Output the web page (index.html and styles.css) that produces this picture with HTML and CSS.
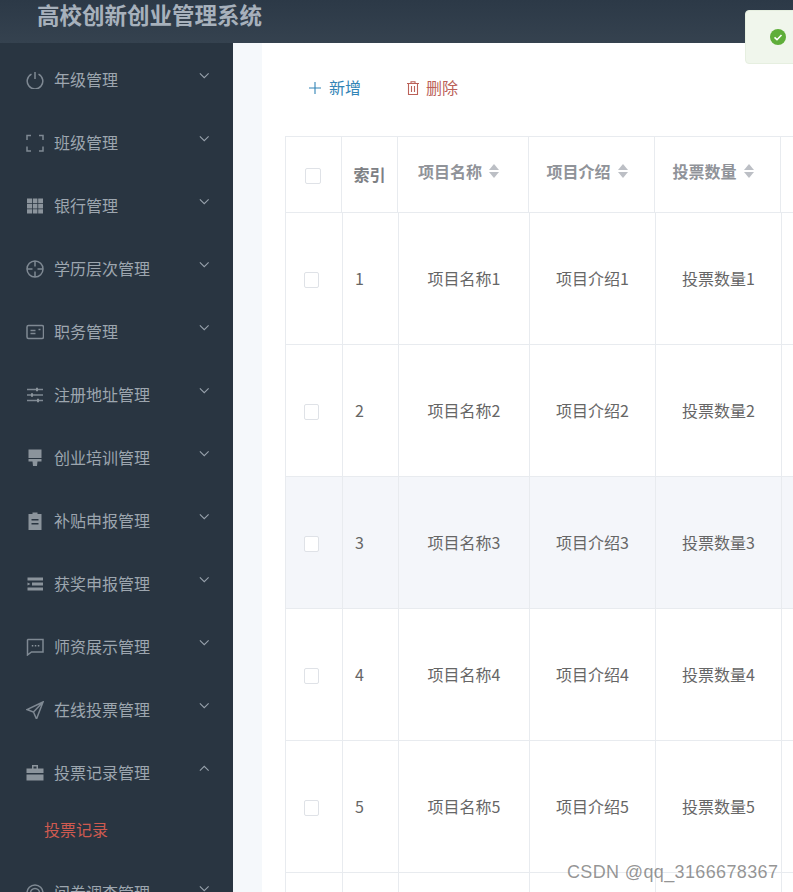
FILE: index.html
```html
<!DOCTYPE html>
<html lang="zh">
<head>
<meta charset="utf-8">
<title>高校创新创业管理系统</title>
<link rel="stylesheet" href="styles.css">
</head>
<body>
<div class="app">
  <header class="topbar"><h1 class="brand">高校创新创业管理系统</h1></header>
  <div class="shell">
    <nav class="sidebar">
      <div class="nav-item"><svg class="ico" viewBox="0 0 18 18"><path class="ln" d="M5.5 3.2a7.8 7.8 0 1 0 7 0M9 1v7"/></svg><span>年级管理</span><svg class="chev" viewBox="0 0 12 8"><path d="M1 1.5l5 5 5-5"/></svg></div>
      <div class="nav-item"><svg class="ico" viewBox="0 0 18 18"><path class="ln" d="M1 6V1.5h4M13 1.5h4V6M17 12.5V17h-4M5 17H1v-4.500"/></svg><span>班级管理</span><svg class="chev" viewBox="0 0 12 8"><path d="M1 1.500l5 5 5-5"/></svg></div>
      <div class="nav-item"><svg class="ico" viewBox="0 0 18 18"><path class="fl" d="M1 1.500h5v4.500H1zM6.800 1.500h4.600v4.500H6.800zM12.200 1.500H17v4.500h-4.800zM1 6.800h5v4.600H1zM6.800 6.800h4.600v4.600H6.800zM12.200 6.800H17v4.600h-4.800zM1 12.200h5V16.500H1zM6.800 12.200h4.600V16.500H6.800zM12.200 12.200H17V16.500h-4.800z"/></svg><span>银行管理</span><svg class="chev" viewBox="0 0 12 8"><path d="M1 1.500l5 5 5-5"/></svg></div>
      <div class="nav-item"><svg class="ico" viewBox="0 0 18 18"><circle class="ln" cx="9" cy="9" r="8"/><path class="ln" d="M9 1v5.500M9 11.500V17M1 9h5.500M11.500 9H17"/></svg><span>学历层次管理</span><svg class="chev" viewBox="0 0 12 8"><path d="M1 1.500l5 5 5-5"/></svg></div>
      <div class="nav-item"><svg class="ico" viewBox="0 0 18 18"><rect class="ln" x="1" y="2.500" width="16.500" height="13" rx="1.500"/><path class="ln" d="M4.500 7.500h5M4.500 10.500h5M12.500 6.500h2"/></svg><span>职务管理</span><svg class="chev" viewBox="0 0 12 8"><path d="M1 1.500l5 5 5-5"/></svg></div>
      <div class="nav-item"><svg class="ico" viewBox="0 0 18 18"><path class="ln" d="M1 3.500h16M1 9h16M1 14.500h16"/><path class="fl" d="M10 1.800h2v3.400h-2zM5 7.300h2v3.400H5zM11 12.800h2v3.400h-2z"/></svg><span>注册地址管理</span><svg class="chev" viewBox="0 0 12 8"><path d="M1 1.500l5 5 5-5"/></svg></div>
      <div class="nav-item"><svg class="ico" viewBox="0 0 18 18"><path class="fl" d="M2.500 .5h13v8.500h-13zM2.500 10h13v2.500h-4l-.5 4.500h-4l-.5-4.500h-4z"/></svg><span>创业培训管理</span><svg class="chev" viewBox="0 0 12 8"><path d="M1 1.500l5 5 5-5"/></svg></div>
      <div class="nav-item"><svg class="ico" viewBox="0 0 18 18"><path class="fl" fill-rule="evenodd" d="M6.500 0.500h5V2h4v16h-13V2h4zM5.500 7v1.500h7V7zM5.500 11v1.500h7V11z"/></svg><span>补贴申报管理</span><svg class="chev" viewBox="0 0 12 8"><path d="M1 1.500l5 5 5-5"/></svg></div>
      <div class="nav-item"><svg class="ico" viewBox="0 0 18 18"><path class="fl" d="M1.500 2.500h15.500v3H1.500zM6 7.500h11v3H6zM1.500 12.500h15.500v3H1.500zM1.500 7.500l3 1.500-3 1.500z"/></svg><span>获奖申报管理</span><svg class="chev" viewBox="0 0 12 8"><path d="M1 1.500l5 5 5-5"/></svg></div>
      <div class="nav-item"><svg class="ico" viewBox="0 0 18 18"><path class="ln" d="M2 1.500h15v12.500H5.500L1.500 17V2z"/><path class="fl" d="M5.800 7h1.500v1.500H5.800zM8.800 7h1.500v1.500H8.800zM11.800 7h1.500v1.500h-1.500z"/></svg><span>师资展示管理</span><svg class="chev" viewBox="0 0 12 8"><path d="M1 1.500l5 5 5-5"/></svg></div>
      <div class="nav-item"><svg class="ico" viewBox="0 0 18 18"><path class="ln" d="M17 1L1 8.500l6.500 2.500 3 7zM7.500 11L17 1"/></svg><span>在线投票管理</span><svg class="chev" viewBox="0 0 12 8"><path d="M1 1.500l5 5 5-5"/></svg></div>
      <div class="nav-item"><svg class="ico" viewBox="0 0 18 18"><path class="fl" d="M6 1h6v3.500h5.500V9H.5V4.500H6zM7.500 2.500v2h3v-2zM.5 10.500h17V16.500H.5z"/></svg><span>投票记录管理</span><svg class="chev" viewBox="0 0 12 8"><path d="M1 6.500l5-5 5 5"/></svg></div>
      <div class="nav-sub">投票记录</div>
      <div class="nav-item"><svg class="ico" viewBox="0 0 18 18"><circle class="ln" cx="9" cy="9" r="8"/><circle class="ln" cx="9" cy="9" r="4.500"/></svg><span>问卷调查管理</span><svg class="chev" viewBox="0 0 12 8"><path d="M1 1.500l5 5 5-5"/></svg></div>
    </nav>
    <main class="main">
      <section class="panel">
        <div class="toolbar">
          <button class="tool tool-add"><svg class="tool-ico" viewBox="0 0 12 12"><path d="M6 0v12M0 6h12"/></svg>新增</button>
          <button class="tool tool-del"><svg class="tool-ico" viewBox="0 0 12 14"><path d="M0 2.500h12M4 2.500V.8h4v1.700M1.500 2.500v11h9v-11M4.500 5v6M7.500 5v6"/></svg>删除</button>
        </div>
        <div class="thead grid">
          <div class="cell"><i class="check check-head"></i></div>
          <div class="cell th-index">索引</div>
          <div class="cell th">项目名称<i class="sort"></i></div>
          <div class="cell th">项目介绍<i class="sort"></i></div>
          <div class="cell th">投票数量<i class="sort"></i></div>
          <div class="cell"></div>
        </div>
        <div class="tbody">
          <div class="row grid"><div class="cell"><i class="check"></i></div><div class="cell idx">1</div><div class="cell">项目名称1</div><div class="cell">项目介绍1</div><div class="cell">投票数量1</div><div class="cell"></div></div>
          <div class="row grid"><div class="cell"><i class="check"></i></div><div class="cell idx">2</div><div class="cell">项目名称2</div><div class="cell">项目介绍2</div><div class="cell">投票数量2</div><div class="cell"></div></div>
          <div class="row grid row-hover"><div class="cell"><i class="check"></i></div><div class="cell idx">3</div><div class="cell">项目名称3</div><div class="cell">项目介绍3</div><div class="cell">投票数量3</div><div class="cell"></div></div>
          <div class="row grid"><div class="cell"><i class="check"></i></div><div class="cell idx">4</div><div class="cell">项目名称4</div><div class="cell">项目介绍4</div><div class="cell">投票数量4</div><div class="cell"></div></div>
          <div class="row grid"><div class="cell"><i class="check"></i></div><div class="cell idx">5</div><div class="cell">项目名称5</div><div class="cell">项目介绍5</div><div class="cell">投票数量5</div><div class="cell"></div></div>
          <div class="row grid"><div class="cell"></div><div class="cell"></div><div class="cell"></div><div class="cell"></div><div class="cell"></div><div class="cell"></div></div>
        </div>
      </section>
    </main>
  </div>
</div>
<div class="toast"><svg class="toast-ico" viewBox="0 0 16 16"><circle cx="8" cy="8" r="8"/><path d="M4.500 8.300l2.500 2.400 4.500-4.700"/></svg></div>
<div class="watermark">CSDN @qq_3166678367</div>
</body>
</html>
```
FILE: styles.css
```css
* { box-sizing: border-box; }
html, body { margin: 0; height: 100%; overflow: hidden; }
body { font-family: "Noto Sans CJK SC", "Liberation Sans", sans-serif; font-size: 16px; color: #666; background: #fff; }
.app { height: 892px; display: flex; flex-direction: column; }

.topbar { height: 43px; flex: none; background: linear-gradient(#2c3947, #35424f); padding-left: 37px; }
.brand { margin: 0; font-size: 22.5px; line-height: 29px; font-weight: 700; color: #a7b1bc; white-space: nowrap; }

.shell { flex: 1; display: flex; min-height: 0; }
.sidebar { width: 233px; flex: none; background: #293541; padding-top: 5px; overflow: hidden; }
.nav-item { height: 63px; display: flex; align-items: center; padding: 0 24px 0 26px; color: #9da6af; line-height: 63px; }
.nav-item span { margin-left: 10px; flex: 1; white-space: nowrap; }
.ico { width: 18px; height: 18px; flex: none; }
.ln { fill: none; stroke: #7f8993; stroke-width: 1.5; }
.fl { fill: #8b949c; }
.chev { width: 10.5px; height: 7px; flex: none; margin-top: -8px; }
.chev path { fill: none; stroke: #98a2ac; stroke-width: 1.200; }
.nav-sub { height: 50px; margin-bottom: 7px; line-height: 50px; padding-left: 44px; color: #cf5a50; }

.main { flex: 1; min-width: 0; background: #f5f8fb; padding-left: 29px; overflow: hidden; }
.panel { height: 100%; background: #fff; padding-left: 23px; overflow: hidden; }
.toolbar { height: 90px; margin-bottom: 3px; padding: 0 0 2px 24px; display: flex; align-items: center; gap: 46px; }
.tool { border: 0; padding: 0; background: none; font: inherit; display: flex; align-items: center; gap: 8px; }
.tool-ico { width: 12px; height: 14px; margin-top: 1px; }
.tool-ico path { fill: none; stroke: currentColor; stroke-width: 1.100; }
.tool-add { color: #3284b6; }
.tool-del { color: #bb6158; gap: 7px; }

.grid { display: grid; grid-template-columns: 56px 56px 131px 126px 126px 200px; }
.thead { height: 77px; border-top: 1px solid #e8ebef; border-bottom: 1px solid #e8ebef; }
.thead .cell { border-left: 1px solid #e8ebef; font-weight: 700; color: #909399; }
.cell { display: flex; align-items: center; justify-content: center; }
.th { padding: 0 8px 7px 0; }
.th-index { color: #7d8084 !important; padding-bottom: 2px; }
.sort { width: 11px; height: 14px; margin-left: 7px; position: relative; flex: none; }
.sort::before, .sort::after { content: ""; position: absolute; left: 0; border-left: 5.500px solid transparent; border-right: 5.500px solid transparent; }
.sort::before { top: 0; border-bottom: 6px solid #bcbfc5; }
.sort::after { bottom: 0; border-top: 6px solid #bcbfc5; }

.tbody .grid { grid-template-columns: 57px 56px 131px 126px 126px 200px; }
.row { height: 132px; border-bottom: 1px solid #e8ebef; }
.row .cell { border-left: 1px solid #e8ebef; color: #666; padding-bottom: 2px; }
.row-hover { background: #f4f6fa; }
.row .idx { justify-content: flex-start; padding-left: 12px; }
.check { display: block; width: 15px; height: 16px; background: #fff; border: 1px solid #dfe2e7; border-radius: 2px; margin: 4px 6px 0 0; }
.check-head { width: 16px; margin: 3px 2px 0 0; }

.toast { position: absolute; left: 745px; top: 10px; width: 80px; height: 54px; background: #f0f6ec; border: 1px solid #e6efe0; border-radius: 4px; padding: 18px 0 0 24px; }
.toast-ico { display: block; width: 16px; height: 16px; }
.toast-ico circle { fill: #5fae3a; }
.toast-ico path { fill: none; stroke: #fff; stroke-width: 1.600; }

.watermark { position: absolute; left: 567px; top: 860px; font-family: "Liberation Sans", sans-serif; font-size: 18px; line-height: 24px; letter-spacing: .36px; color: rgba(120,120,120,.78); white-space: nowrap; }
```
